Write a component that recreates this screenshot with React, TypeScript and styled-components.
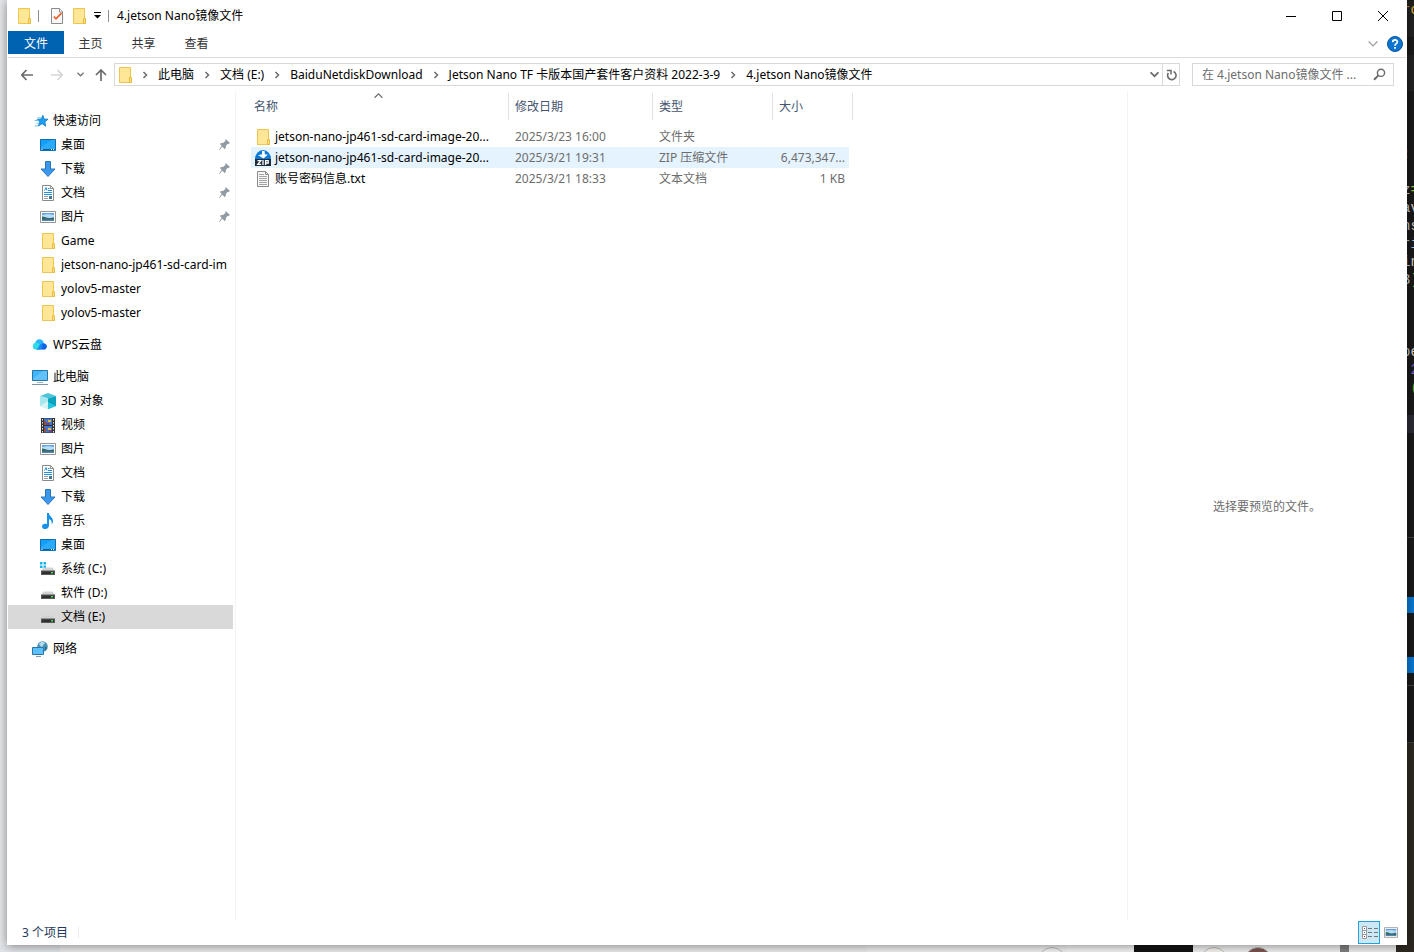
import React from 'react';
import styled, { createGlobalStyle } from 'styled-components';

const GlobalStyle = createGlobalStyle`
  * { box-sizing: border-box; }
  body {
    margin: 0;
    font-family: "Noto Sans", "Noto Sans CJK SC", sans-serif;
    font-size: 12px;
    line-height: 18px;
    color: #000;
  }
  button, input { font: inherit; color: inherit; }
  button { border: 0; padding: 0; background: none; }
  svg { display: block; flex: none; }
`;

/* ---------- icons ---------- */

const FolderIcon = () => (
  <svg width="14" height="16" viewBox="-1 0 14 16">
    <path d="M.5.5h11v10l1 1v4H.5z" fill="#ffe493" stroke="#eec54d" />
    <path d="M1.500 2h9v8l-1 1v4h-8z" fill="#ffe797" />
    <path d="M10.500 15.500v-5h2v5z" fill="#ffdf80" stroke="#e7bc45" />
  </svg>
);

const CheckDocIcon = () => (
  <svg width="14" height="16" viewBox="0 0 14 16">
    <path d="M.5.5h8l3 3v12H.5z" fill="#f8f8f8" stroke="#8b8b8b" />
    <path d="M8.500.5v3.500h3" fill="#fff" stroke="#8b8b8b" />
    <path d="M2.800 8.500L5 10.800l5.500-5.600" fill="none" stroke="#f0612a" strokeWidth="1.800" />
  </svg>
);

const CustomizeIcon = () => (
  <svg width="8" height="7" viewBox="0 0 8 7">
    <path d="M1 0h7v1H1zM1 3h7L4.500 6.500z" fill="#000" />
  </svg>
);

const MinimizeIcon = () => (
  <svg width="10" height="10" viewBox="0 0 10 10"><path d="M0 5h10v1H0z" /></svg>
);
const MaximizeIcon = () => (
  <svg width="10" height="10" viewBox="0 0 10 10"><path d="M.5.5h9v9h-9z" fill="none" stroke="#000" /></svg>
);
const CloseIcon = () => (
  <svg width="10" height="10" viewBox="0 0 10 10"><path d="M0 0l10 10M10 0L0 10" stroke="#000" /></svg>
);

type ChevronProps = { dir: 'down' | 'right' | 'up'; size?: number; color?: string; weight?: number };

const Chevron = ({ dir, size = 8, color = '#6b6b6b', weight = 1.5 }: ChevronProps) => (
  <svg width={size} height={size} viewBox="0 0 8 8" fill="none" stroke={color} strokeWidth={weight}>
    <path d={{ down: 'M.5 2L4 5.500 7.500 2', right: 'M2.500 1l3 3-3 3', up: 'M.5 6L4 2.500 7.500 6' }[dir]} />
  </svg>
);

const ArrowIcon = ({ kind, color }: { kind: 'back' | 'forward' | 'up'; color: string }) => (
  <svg width="12" height="12" viewBox="0 0 12 12" fill="none" stroke={color} strokeWidth="1.700">
    <path
      d={{
        back: 'M12 6H1M5.500 1L.8 6l4.700 5',
        forward: 'M0 6h11M6.500 1l4.700 5-4.700 5',
        up: 'M6 12V1M1 6l5-5 5 5',
      }[kind]}
    />
  </svg>
);

const RefreshIcon = () => (
  <svg width="11" height="12" viewBox="0 0 11 12" fill="none" stroke="#6b6b6b" strokeWidth="1.600">
    <path d="M7.500 2.600A4.200 4.200 0 1 1 2.400 4" />
    <path d="M.8 1.500h4.200v4" strokeWidth="1.500" />
  </svg>
);

const SearchIcon = () => (
  <svg width="13" height="13" viewBox="0 0 13 13" fill="none" stroke="#6b6b6b">
    <circle cx="8" cy="4.800" r="3.600" strokeWidth="1.400" />
    <path d="M5.400 7.400L1 11.800" strokeWidth="2" />
  </svg>
);

const HelpIcon = () => (
  <svg width="16" height="16" viewBox="0 0 16 16">
    <circle cx="8" cy="8" r="7.500" fill="#0b74d1" stroke="#0a569c" />
    <path d="M5.700 6.200c0-3.200 4.700-3 4.700-.3C10.400 7.700 8 7.700 8 9.700" fill="none" stroke="#fff" strokeWidth="1.700" />
    <path d="M7.100 10.900h1.800v1.800H7.100z" fill="#fff" />
  </svg>
);

const StarIcon = () => (
  <svg width="16" height="16" viewBox="-3 -1 18 18">
    <path d="M9.300 1.500l1.300 4.300 4.400.2-3.500 2.900.9 4.900-4-2.700L4.200 13.500l1.600-4.300L3 6.300l4.400-.6z" fill="#1aa0f5" stroke="#1479bd" strokeWidth=".9" />
    <path d="M3 4.500h4M0 7.500h5M2 10.500h3M0 13.500h4" stroke="#54b4ee" />
  </svg>
);

const DesktopIcon = () => (
  <svg width="16" height="16" viewBox="0 0 16 16">
    <path d="M.5 2.500h15v11H.5z" fill="#14a0fa" stroke="#0d6fae" />
    <path d="M1 10L12 3h3v9H1z" fill="#3db2fc" opacity=".6" />
    <path d="M1 12h14v1H1z" fill="#0a5f99" />
    <path d="M1.500 12h1v1h-1zM11 12h1v1h-1zM13 12h1v1h-1z" fill="#fff" />
  </svg>
);

const DownloadIcon = () => (
  <svg width="16" height="16" viewBox="0 0 16 16">
    <path d="M5.500.5h5v7.500h4.500L8 15.500 1 8h4.500z" fill="#3b97e9" stroke="#2a76bd" />
  </svg>
);

const DocumentIcon = () => (
  <svg width="16" height="16" viewBox="0 0 16 16">
    <path d="M2.500.5h8l3 3v12h-11z" fill="#fff" stroke="#8a8a8a" />
    <path d="M10.500.5v3h3" fill="none" stroke="#8a8a8a" />
    <path d="M4.500 5.500l1.500-3 1 3M8 3.500h1.500M8 5.500h4M4 7.500h8M4 9.500h8" fill="none" stroke="#1f8fdd" />
    <path d="M4 11.500h4M4 13.500h4" stroke="#9a9a9a" />
    <path d="M9 11h3v3H9z" fill="#417b93" />
  </svg>
);

const PictureIcon = ({ width = 16, height = 12 }: { width?: number; height?: number }) => (
  <svg width={width} height={height} viewBox="0 2 16 12">
    <path d="M.5 2.500h15v11H.5z" fill="#fff" stroke="#959595" />
    <path d="M2 4h12v8H2z" fill="#b6dcf7" />
    <path d="M2 4h12v2L8 5 2 6z" fill="#5fa3e6" />
    <path d="M2 7.500c3 .3 4 1.500 7 1.500s3-.6 5-.6V11H2z" fill="#37695f" />
    <path d="M2 10.500h12V12H2z" fill="#4e83b5" />
  </svg>
);

const CloudIcon = () => (
  <svg width="16" height="16" viewBox="0 0 17 17">
    <circle cx="8" cy="7" r="4.500" fill="#2bb6fb" />
    <circle cx="4.500" cy="9.800" r="3.600" fill="#2ddce4" />
    <path d="M4.500 13.400C7 13 7.500 8 11 7a3.400 3.400 0 1 1 .8 6.400z" fill="#0d63e8" />
    <path d="M4.500 13.400C7 13 7.500 9 10 7.500c2-.2 1 5.900-1 5.900z" fill="#178bf3" />
  </svg>
);

const ComputerIcon = () => (
  <svg width="16" height="16" viewBox="0 0 16 16">
    <path d="M.5 1.500h15v10H.5z" fill="#41b5fc" stroke="#2876a8" />
    <path d="M1 9.500L11 2h4v9H1z" fill="#74cafd" opacity=".6" />
    <path d="M5 13h6v1H5z" fill="#9fb2c3" />
    <path d="M0 15h16v1H0z" fill="#7f92a6" />
  </svg>
);

const CubeIcon = () => (
  <svg width="16" height="16" viewBox="0 0 16 16">
    <path d="M0 3l8-3 8 3-8 2.500z" fill="#4cc3d9" />
    <path d="M0 3l8 2.500V16l-8-3z" fill="#a6e8ee" />
    <path d="M16 3L8 5.500V16l8-3z" fill="#0aa2bd" />
    <path d="M0 13l8-5v8z" fill="#d6f4f4" />
    <path d="M8 9l8 4-8 3z" fill="#28c6dc" />
  </svg>
);

const VideoIcon = () => (
  <svg width="16" height="16" viewBox="0 0 16 16">
    <path d="M1 1h14v15H1z" fill="#333" />
    <path d="M4 1.500h8v6.500H4zM4 9h8v6.500H4z" fill="#3f78cc" />
    <path d="M4 3l3 3-2 2H4zM4 10l3 3-2 2H4z" fill="#9b4a36" />
    <path d="M8 3h3v2H8zM8 11h3v2H8z" fill="#e5bd2f" />
    <path d="M6 6h4v2H6zM9 13h3v2H9z" fill="#77408b" />
    <path d="M2.500 2v14M13.500 2v14" stroke="#e8e8e8" strokeDasharray="1.500 1.500" />
  </svg>
);

const MusicIcon = () => (
  <svg width="16" height="16" viewBox="0 0 16 16">
    <path d="M7 0h2c0 3.500 4 4 4 8 0 1.500-.6 2.600-1.500 3.500.7-2.500-.2-4.600-2.500-5.500v6.500C9 17 2 17 2 13.400c0-2.500 3-3.200 5-2.200z" fill="#1591ea" />
  </svg>
);

const DriveIcon = ({ system = false }: { system?: boolean }) => (
  <svg width="16" height="16" viewBox="0 0 16 16">
    {system && <path d="M0 1h2.500v2.500H0zM3.500 1H6v2.500H3.500zM0 4.500h2.500V7H0zM3.500 4.500H6V7H3.500z" fill="#12b5ea" />}
    <path d="M3.500 6.500h9L15 10H1z" fill="#d0d2d4" />
    <path d="M1 9.500h14V14H1z" fill="#5a5a5a" />
    <path d="M2 10.500h12V13H2z" fill="#303030" />
    <path d="M11 11h2v1.500h-2z" fill="#48dc55" />
  </svg>
);

const NetworkIcon = () => (
  <svg width="16" height="16" viewBox="0 0 16 16">
    <circle cx="10.500" cy="5.500" r="5.300" fill="#4b94b5" />
    <path d="M7 3c2-3 5-2 6-1l-2 2-1 3z" fill="#b4dcea" />
    <path d="M13 5l2 2-2 3z" fill="#27688c" />
    <path d="M.5 6.500h11v7H.5z" fill="#5cc0fb" stroke="#2875a6" />
    <path d="M4 15h5v1H4z" fill="#8798a8" />
  </svg>
);

const PinIcon = () => (
  <svg width="11" height="12" viewBox="0 0 11 12" fill="#8f9aa3">
    <path d="M6.500 0L11 4 9.500 5 8.500 5 6.800 7v2L5.500 10 3.500 7.800.4 11 0 10.600 2.800 7 1 5l1-1h2L6.200 2.200z" />
  </svg>
);

const ZipIcon = () => (
  <svg width="16" height="16" viewBox="0 0 16 16">
    <path d="M0 9a8 9 0 0 1 16 0z" fill="#0a79d8" />
    <path d="M7 1h2.500l.5 3.500h3L8.500 8.500 3 5l4-.5z" fill="#fff" />
    <path d="M0 9h16v7H0z" fill="#1f2d3a" />
    <path d="M2.500 10.700h3.300L2.800 14.300h3.400M8 10v5M10.600 15v-4.300h2.600v2.300h-2.600" fill="none" stroke="#fff" strokeWidth="1.300" />
  </svg>
);

const TextFileIcon = () => (
  <svg width="16" height="16" viewBox="0 0 16 16">
    <path d="M2.500.5h8l3 3v12h-11z" fill="#f7f7f7" stroke="#8a8a8a" />
    <path d="M10.500.5v3h3" fill="none" stroke="#8a8a8a" />
    <path d="M4 3.500h5M4 5.500h8M4 7.500h8M4 9.500h8M4 11.500h8M4 13.500h8" stroke="#a5a5a5" />
  </svg>
);

const DetailsViewIcon = () => (
  <svg width="16" height="13" viewBox="0 0 16 13">
    <path d="M.5.5h4v12h-4zM.5 4.500h4M.5 8.500h4" fill="#fff" stroke="#9a9a9a" />
    <path d="M2 2h1v1H2z" fill="#555" />
    <path d="M2 6h1v1H2z" fill="#3b82f6" />
    <path d="M2 10h1v1H2z" fill="#d02020" />
    <path d="M6 2.500h4M12 2.500h4M6 6.500h4M12 6.500h4M6 10.500h4M12 10.500h4" stroke="#777" />
  </svg>
);

/* ---------- desktop behind the window ---------- */

const Desktop = styled.div`
  position: relative;
  display: flex;
  min-height: 100vh;
  padding: 0 7px 7px;
  background: #e6e8eb;
  overflow: hidden;
`;

const Editor = styled.div`
  position: absolute;
  top: 0;
  right: 0;
  bottom: 0;
  width: 18px;
  padding-top: 1px;
  overflow: hidden;
  background: linear-gradient(#1a1a1a 0 742px, #2d2922 742px);
`;

const CodeLine = styled.div<{ $bg?: string }>`
  height: 18px;
  padding-left: 6px;
  font: 14px/18px "Liberation Mono", monospace;
  white-space: pre;
  background: ${(p) => p.$bg ?? 'transparent'};
`;

const Token = styled.span<{ $color: string }>`
  color: ${(p) => p.$color};
`;

const EditorPanel = styled.div<{ $height: number; $fill?: string; $line?: boolean }>`
  height: ${(p) => p.$height}px;
  border-bottom: ${(p) => (p.$line ? '1px solid #414141' : '0')};
  background: ${(p) => p.$fill ?? 'transparent'};
`;

const Backdrop = styled.div`
  position: absolute;
  left: 0;
  right: 0;
  bottom: 0;
  height: 7px;
  display: flex;
  overflow: hidden;
`;

const Strip = styled.div<{ $width?: number; $color: string }>`
  display: flex;
  flex: ${(p) => (p.$width ? `0 0 ${p.$width}px` : '1')};
  justify-content: flex-end;
  background: ${(p) => p.$color};
`;

const Avatar = styled.div<{ $color: string }>`
  width: 28px;
  height: 28px;
  margin: 2px 0 0;
  border: 1px solid #bdbdbd;
  border-radius: 50%;
  background: ${(p) => p.$color};
`;

const AvatarStrip = styled(Strip)`
  justify-content: flex-start;
  gap: 16px;
  padding-left: 7px;
`;

/* ---------- window ---------- */

const Window = styled.div`
  position: relative;
  flex: 1;
  min-width: 0;
  display: flex;
  flex-direction: column;
  padding: 0 1px;
  background: #fff;
  box-shadow: 0 1px 10px rgba(0, 0, 0, 0.45);
`;

const TitleBar = styled.header`
  display: flex;
  align-items: center;
  height: 31px;
  padding-left: 9px;
`;

const QuickAccess = styled.div`
  display: flex;
  align-items: center;
  gap: 12px;
`;

const QuickTools = styled.div`
  display: flex;
  align-items: center;
  gap: 7px;
`;

const ToolButton = styled.button`
  display: flex;
  align-items: center;
`;

const Divider = styled.span<{ $height: number; $color: string }>`
  width: 1px;
  height: ${(p) => p.$height}px;
  background: ${(p) => p.$color};
`;

const Title = styled.h1`
  flex: 1;
  margin: 0 0 0 8px;
  font-size: 12px;
  line-height: 18px;
  font-weight: 400;
`;

const CaptionButton = styled.button`
  display: flex;
  align-items: center;
  justify-content: center;
  width: 46px;
  height: 30px;
`;

const Tabs = styled.nav`
  display: flex;
  align-items: flex-start;
  height: 27px;
  padding-right: 3px;
  border-bottom: 1px solid #dadbdc;
`;

const Tab = styled.button<{ $active?: boolean }>`
  width: ${(p) => (p.$active ? 56 : 53)}px;
  height: 23px;
  padding-top: 2px;
  line-height: 21px;
  color: ${(p) => (p.$active ? '#fff' : '#333')};
  background: ${(p) => (p.$active ? '#0063b1' : 'transparent')};
`;

const TabTools = styled.div`
  display: flex;
  align-items: center;
  gap: 9px;
  height: 26px;
  margin-left: auto;
`;

const NavBar = styled.div`
  display: flex;
  align-items: center;
  padding: 5px 12px 6px 13px;
`;

const NavButton = styled.button<{ $width: number }>`
  display: flex;
  align-items: center;
  justify-content: flex-start;
  width: ${(p) => p.$width}px;
  height: 23px;
`;

const AddressBar = styled.div`
  flex: 1;
  min-width: 0;
  display: flex;
  align-items: center;
  height: 23px;
  padding-left: 3px;
  border: 1px solid #d9d9d9;
`;

const Crumbs = styled.ol`
  flex: 1;
  min-width: 0;
  display: flex;
  align-items: center;
  margin: 0;
  padding: 0;
  list-style: none;
  overflow: hidden;
`;

const Crumb = styled.li`
  display: flex;
  align-items: center;
  white-space: nowrap;
`;

const CrumbArrow = styled.span`
  display: flex;
  justify-content: center;
  width: 26px;
`;

const AddressButton = styled.button<{ $bordered?: boolean }>`
  display: flex;
  align-items: center;
  justify-content: center;
  width: ${(p) => (p.$bordered ? 17 : 15)}px;
  height: 21px;
  border-left: ${(p) => (p.$bordered ? '1px solid #d9d9d9' : '0')};
`;

const SearchBox = styled.label`
  display: flex;
  align-items: center;
  width: 202px;
  height: 23px;
  margin-left: 12px;
  padding: 0 7px 0 9px;
  border: 1px solid #d9d9d9;
`;

const SearchInput = styled.input`
  flex: 1;
  min-width: 0;
  height: 21px;
  padding: 0;
  border: 0;
  outline: 0;
  background: transparent;
  &::placeholder { color: #6d6d6d; opacity: 1; }
`;

const Body = styled.div`
  flex: 1;
  display: flex;
  min-height: 0;
`;

const Sidebar = styled.nav`
  width: 228px;
  padding: 17px 2px 0 0;
  border-right: 1px solid #f3f3f3;
`;

const TreeGroup = styled.ul`
  margin: 0 0 8px;
  padding: 0;
  list-style: none;
`;

const TreeItem = styled.button<{ $child?: boolean; $selected?: boolean }>`
  display: flex;
  align-items: center;
  gap: 5px;
  width: 100%;
  height: 24px;
  padding-left: ${(p) => (p.$child ? 32 : 24)}px;
  text-align: left;
  white-space: nowrap;
  overflow: hidden;
  background: ${(p) => (p.$selected ? '#d9d9d9' : 'transparent')};
`;

const TreeLabel = styled.span`
  flex: 1;
  min-width: 0;
  overflow: hidden;
`;

const PinSlot = styled.span`
  margin-right: 3px;
`;

const IconSlot = styled.span`
  display: flex;
  justify-content: center;
  width: 16px;
`;

const Files = styled.main`
  flex: 1;
  min-width: 0;
  padding-left: 15px;
`;

const FileTable = styled.table`
  width: 602px;
  table-layout: fixed;
  border-collapse: separate;
  border-spacing: 0;
`;

const HeadCell = styled.th<{ $width: number }>`
  width: ${(p) => p.$width}px;
  height: 34px;
  padding: 1px 0 0;
  vertical-align: top;
  text-align: left;
  font-weight: 400;
`;

const HeadButton = styled.button<{ $first?: boolean }>`
  position: relative;
  display: block;
  width: 100%;
  height: 27px;
  padding-left: ${(p) => (p.$first ? 3 : 6)}px;
  border-right: 1px solid #e2e2e2;
  text-align: left;
  color: #44546f;
`;

const SortMark = styled.span`
  position: absolute;
  top: -2px;
  left: 50%;
  margin-left: -6px;
`;

const FileRow = styled.tr<{ $hover?: boolean }>`
  td { background: ${(p) => (p.$hover ? '#e5f3ff' : 'transparent')}; }
`;

const Cell = styled.td<{ $end?: boolean }>`
  height: 21px;
  padding: 0 4px 0 6px;
  border-right: ${(p) => (p.$end ? '4px solid #fff' : '0')};
  line-height: 21px;
  text-align: ${(p) => (p.$end ? 'right' : 'left')};
  white-space: nowrap;
  color: #6d6d6d;
`;

const NameCell = styled(Cell)`
  padding-left: 4px;
  color: #000;
`;

const FileName = styled.span`
  display: flex;
  align-items: center;
  gap: 4px;
`;

const Preview = styled.aside`
  display: flex;
  align-items: center;
  justify-content: center;
  width: 279px;
  padding-top: 2px;
  border-left: 1px solid #f3f3f3;
  color: #6d6d6d;
`;

const StatusBar = styled.footer`
  display: flex;
  align-items: center;
  gap: 10px;
  height: 25px;
  padding: 0 8px 0 14px;
  color: #1e395b;
`;

const ViewButtons = styled.div`
  display: flex;
  align-items: center;
  gap: 4px;
  margin-left: auto;
`;

const ViewButton = styled.button<{ $active?: boolean }>`
  display: flex;
  align-items: center;
  justify-content: center;
  width: ${(p) => (p.$active ? 22 : 14)}px;
  height: 23px;
  padding-left: ${(p) => (p.$active ? 2 : 0)}px;
  border: ${(p) => (p.$active ? '1px solid #26a0da' : '0')};
  background: ${(p) => (p.$active ? '#cbe8f6' : 'transparent')};
`;

/* ---------- data ---------- */

type Node = { label: string; icon: React.ReactNode; pinned?: boolean; selected?: boolean };

const groups: { root: Node; children: Node[] }[] = [
  {
    root: { label: '快速访问', icon: <StarIcon /> },
    children: [
      { label: '桌面', icon: <DesktopIcon />, pinned: true },
      { label: '下载', icon: <DownloadIcon />, pinned: true },
      { label: '文档', icon: <DocumentIcon />, pinned: true },
      { label: '图片', icon: <PictureIcon />, pinned: true },
      { label: 'Game', icon: <FolderIcon /> },
      { label: 'jetson-nano-jp461-sd-card-im', icon: <FolderIcon /> },
      { label: 'yolov5-master', icon: <FolderIcon /> },
      { label: 'yolov5-master', icon: <FolderIcon /> },
    ],
  },
  { root: { label: 'WPS云盘', icon: <CloudIcon /> }, children: [] },
  {
    root: { label: '此电脑', icon: <ComputerIcon /> },
    children: [
      { label: '3D 对象', icon: <CubeIcon /> },
      { label: '视频', icon: <VideoIcon /> },
      { label: '图片', icon: <PictureIcon /> },
      { label: '文档', icon: <DocumentIcon /> },
      { label: '下载', icon: <DownloadIcon /> },
      { label: '音乐', icon: <MusicIcon /> },
      { label: '桌面', icon: <DesktopIcon /> },
      { label: '系统 (C:)', icon: <DriveIcon system /> },
      { label: '软件 (D:)', icon: <DriveIcon /> },
      { label: '文档 (E:)', icon: <DriveIcon />, selected: true },
    ],
  },
  { root: { label: '网络', icon: <NetworkIcon /> }, children: [] },
];

const crumbs = ['此电脑', '文档 (E:)', 'BaiduNetdiskDownload', 'Jetson Nano TF 卡版本国产套件客户资料 2022-3-9', '4.jetson Nano镜像文件'];

const files = [
  { name: 'jetson-nano-jp461-sd-card-image-20...', date: '2025/3/23 16:00', type: '文件夹', size: '', icon: <FolderIcon /> },
  { name: 'jetson-nano-jp461-sd-card-image-20...', date: '2025/3/21 19:31', type: 'ZIP 压缩文件', size: '6,473,347...', icon: <ZipIcon />, hover: true },
  { name: '账号密码信息.txt', date: '2025/3/21 18:33', type: '文本文档', size: '1 KB', icon: <TextFileIcon /> },
];

/* line number -> coloured tokens */
const code: Record<number, [string, string][]> = {
  0: [['r', '#d08a45'], ['o', '#d9b13b']],
  8: [[':', '#c9803c']],
  10: [['z', '#d0d0d0'], ['=', '#8cc23a']],
  11: [['av', '#d0d0d0']],
  12: [['ns', '#d0d0d0']],
  13: [['ri', '#a9c7de']],
  14: [['in', '#d0d0d0']],
  15: [['3', '#d0d0d0'], [')', '#6db33f']],
  19: [['pe', '#d0d0d0']],
  20: [[' 2', '#7e62cf']],
  21: [[' (', '#5fae2c']],
};

const lineFill = (i: number) => {
  if (i === 23) return '#2c2c36';
  if (i < 5 && i !== 2) return '#222';
  return undefined;
};

const TreeNode = ({ node, child }: { node: Node; child?: boolean }) => (
  <li>
    <TreeItem $child={child} $selected={node.selected}>
      <IconSlot>{node.icon}</IconSlot>
      <TreeLabel>{node.label}</TreeLabel>
      {node.pinned && <PinSlot><PinIcon /></PinSlot>}
    </TreeItem>
  </li>
);

export default function App() {
  return (
    <Desktop>
      <GlobalStyle />
      <Backdrop aria-hidden>
        <Strip $width={60} $color="#e2e5e9" />
        <Strip $color="#ebebeb" />
        <Strip $width={200} $color="#f0f0f0"><Avatar $color="#f4f4f4" /></Strip>
        <Strip $width={68} $color="#f4f4f4" />
        <Strip $width={59} $color="#141414" />
        <AvatarStrip $width={147} $color="#f0f0f0">
          <Avatar $color="#f7f4f1" />
          <Avatar $color="#7a544f" />
        </AvatarStrip>
        <Strip $width={9} $color="#808080" />
        <Strip $width={47} $color="#eeeeee" />
        <Strip $width={18} $color="#2d2922" />
      </Backdrop>
      <Editor aria-hidden>
        {Array.from({ length: 25 }, (_, i) => (
          <CodeLine key={i} $bg={lineFill(i)}>
            {code[i]?.map(([text, color]) => <Token key={text} $color={color}>{text}</Token>)}
          </CodeLine>
        ))}
        <EditorPanel $height={87} $line />
        <EditorPanel $height={59} />
        <EditorPanel $height={16} $fill="#0a7ad6" />
        <EditorPanel $height={44} />
        <EditorPanel $height={16} $fill="#0a7ad6" />
        <EditorPanel $height={13} $line />
        <EditorPanel $height={57} $line />
      </Editor>

      <Window>
        <TitleBar>
          <QuickAccess>
            <QuickTools>
              <FolderIcon />
              <Divider $height={12} $color="#8f8f8f" />
            </QuickTools>
            <QuickTools>
              <ToolButton aria-label="属性"><CheckDocIcon /></ToolButton>
              <ToolButton aria-label="新建文件夹"><FolderIcon /></ToolButton>
              <ToolButton aria-label="自定义快速访问工具栏"><CustomizeIcon /></ToolButton>
              <Divider $height={12} $color="#8f8f8f" />
            </QuickTools>
          </QuickAccess>
          <Title>4.jetson Nano镜像文件</Title>
          <CaptionButton aria-label="最小化"><MinimizeIcon /></CaptionButton>
          <CaptionButton aria-label="最大化"><MaximizeIcon /></CaptionButton>
          <CaptionButton aria-label="关闭"><CloseIcon /></CaptionButton>
        </TitleBar>

        <Tabs>
          <Tab $active>文件</Tab>
          <Tab>主页</Tab>
          <Tab>共享</Tab>
          <Tab>查看</Tab>
          <TabTools>
            <button aria-label="展开功能区"><Chevron dir="down" size={10} color="#a0a0a0" weight={1} /></button>
            <button aria-label="帮助"><HelpIcon /></button>
          </TabTools>
        </Tabs>

        <NavBar>
          <NavButton $width={30} aria-label="返回"><ArrowIcon kind="back" color="#6b6b6b" /></NavButton>
          <NavButton $width={26} aria-label="前进"><ArrowIcon kind="forward" color="#d5d5d5" /></NavButton>
          <NavButton $width={18} aria-label="最近浏览的位置"><Chevron dir="down" size={7} color="#757575" /></NavButton>
          <NavButton $width={19} aria-label="上移"><ArrowIcon kind="up" color="#6b6b6b" /></NavButton>
          <AddressBar>
            <FolderIcon />
            <Crumbs>
              {crumbs.map((c) => (
                <Crumb key={c}>
                  <CrumbArrow><Chevron dir="right" /></CrumbArrow>
                  <button>{c}</button>
                </Crumb>
              ))}
            </Crumbs>
            <AddressButton aria-label="上一个位置"><Chevron dir="down" size={9} /></AddressButton>
            <AddressButton $bordered aria-label="刷新"><RefreshIcon /></AddressButton>
          </AddressBar>
          <SearchBox>
            <SearchInput aria-label="搜索" placeholder="在 4.jetson Nano镜像文件 ..." />
            <SearchIcon />
          </SearchBox>
        </NavBar>

        <Body>
          <Sidebar>
            {groups.map((g) => (
              <TreeGroup key={g.root.label}>
                <TreeNode node={g.root} />
                {g.children.map((n, i) => <TreeNode key={i} node={n} child />)}
              </TreeGroup>
            ))}
          </Sidebar>

          <Files>
            <FileTable>
              <thead>
                <tr>
                  <HeadCell $width={258}>
                    <HeadButton $first>名称<SortMark><Chevron dir="up" size={9} weight={1} /></SortMark></HeadButton>
                  </HeadCell>
                  <HeadCell $width={144}><HeadButton>修改日期</HeadButton></HeadCell>
                  <HeadCell $width={120}><HeadButton>类型</HeadButton></HeadCell>
                  <HeadCell $width={80}><HeadButton>大小</HeadButton></HeadCell>
                </tr>
              </thead>
              <tbody>
                {files.map((f, i) => (
                  <FileRow key={i} $hover={f.hover}>
                    <NameCell><FileName><IconSlot>{f.icon}</IconSlot>{f.name}</FileName></NameCell>
                    <Cell>{f.date}</Cell>
                    <Cell>{f.type}</Cell>
                    <Cell $end>{f.size}</Cell>
                  </FileRow>
                ))}
              </tbody>
            </FileTable>
          </Files>

          <Preview>选择要预览的文件。</Preview>
        </Body>

        <StatusBar>
          <span>3 个项目</span>
          <Divider $height={11} $color="#ececec" />
          <ViewButtons>
            <ViewButton $active aria-label="详细信息"><DetailsViewIcon /></ViewButton>
            <ViewButton aria-label="大缩略图"><PictureIcon width={14} height={11} /></ViewButton>
          </ViewButtons>
        </StatusBar>
      </Window>
    </Desktop>
  );
}
